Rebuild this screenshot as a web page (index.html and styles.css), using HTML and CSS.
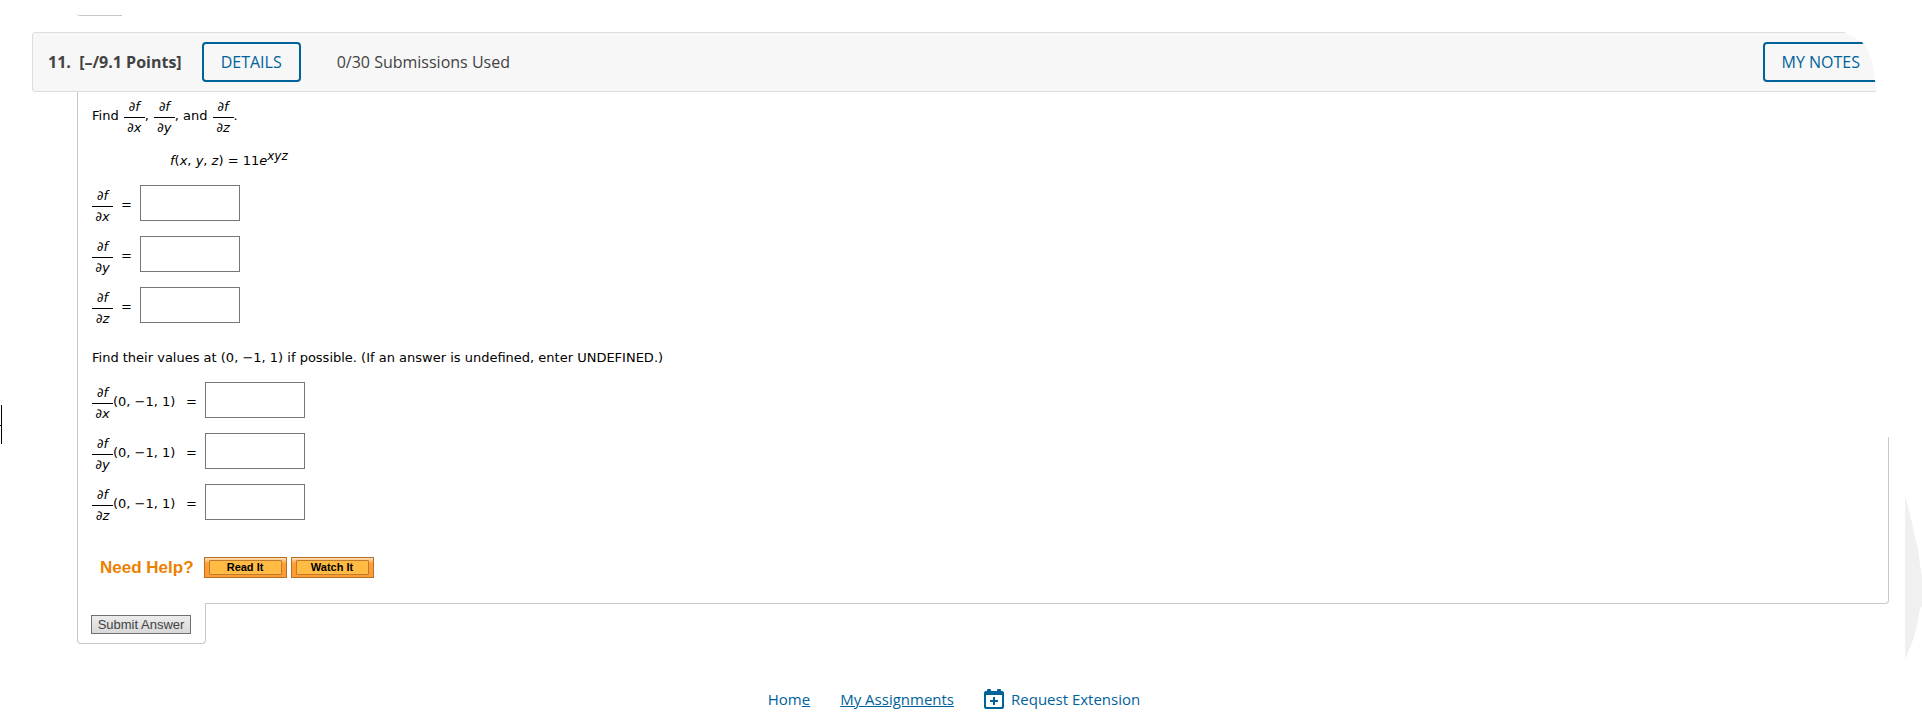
FILE: index.html
```
<!DOCTYPE html>
<html lang="en">
<head>
<meta charset="UTF-8" />
<title>Assignment</title>
<link rel="stylesheet" href="styles.css">
</head>
<body>
  <div class="previous"></div>

  <div class="header">
    <h2>11.&nbsp; [–/9.1 Points]</h2>
    <button type="button" class="outline">DETAILS</button>
    <span class="used">0/30 Submissions Used</span>
    <button type="button" class="outline notes">MY NOTES</button>
  </div>

  <form class="question">
    <div class="panel">
      <div class="row find">
        <span class="txt">Find</span>
        <span class="frac"><i>∂f</i><i>∂x</i></span><span class="txt comma">,</span>
        <span class="frac"><i>∂f</i><i>∂y</i></span><span class="txt comma">, and</span>
        <span class="frac"><i>∂f</i><i>∂z</i></span><span class="txt">.</span>
      </div>

      <p class="function"><i>f</i>(<i>x</i>, <i>y</i>, <i>z</i>) = 11<i>e</i><sup><i>xyz</i></sup></p>

      <div class="row">
        <label class="frac" for="fx"><i>∂f</i><i>∂x</i></label>
        <span class="txt equals">=</span>
        <input type="text" id="fx">
      </div>
      <div class="row">
        <label class="frac" for="fy"><i>∂f</i><i>∂y</i></label>
        <span class="txt equals">=</span>
        <input type="text" id="fy">
      </div>
      <div class="row">
        <label class="frac" for="fz"><i>∂f</i><i>∂z</i></label>
        <span class="txt equals">=</span>
        <input type="text" id="fz">
      </div>

      <p class="values">Find their values at (0, −1, 1) if possible. (If an answer is undefined, enter UNDEFINED.)</p>

      <div class="row">
        <label class="frac" for="vx"><i>∂f</i><i>∂x</i></label>
        <span class="txt point">(0, −1, 1)</span>
        <span class="txt equals">=</span>
        <input type="text" id="vx">
      </div>
      <div class="row">
        <label class="frac" for="vy"><i>∂f</i><i>∂y</i></label>
        <span class="txt point">(0, −1, 1)</span>
        <span class="txt equals">=</span>
        <input type="text" id="vy">
      </div>
      <div class="row">
        <label class="frac" for="vz"><i>∂f</i><i>∂z</i></label>
        <span class="txt point">(0, −1, 1)</span>
        <span class="txt equals">=</span>
        <input type="text" id="vz">
      </div>

      <div class="help">
        <span class="need">Need Help?</span>
        <button type="button" class="helpbtn"><span>Read It</span></button>
        <button type="button" class="helpbtn"><span>Watch It</span></button>
      </div>
    </div>

    <div class="bottom">
      <div class="tab"><button type="button" class="submit">Submit Answer</button></div>
      <div class="rule"></div>
    </div>
  </form>

  <div class="footer">
    <a href="#" class="home">Hom<u>e</u></a>
    <a href="#" class="assignments">My Assignments</a>
    <a href="#" class="extension">
      <svg width="20" height="20" viewBox="0 0 20 20" aria-hidden="true">
        <path fill="#00629b" fill-rule="evenodd" d="M4 0h2q1 0 1 1v1h6V1q0-1 1-1h2q1 0 1 1v1h1q2 0 2 2v14q0 2-2 2H2q-2 0-2-2V4q0-2 2-2h1V1q0-1 1-1zM2 6v11q0 1 1 1h14q1 0 1-1V6z"/>
        <path stroke="#00629b" stroke-width="2" d="M10 8v8M6 12h8"/>
      </svg>
      Request Extension
    </a>
  </div>

  <!-- leftovers at the window edges -->
  <svg class="cursor" width="2" height="39" viewBox="0 0 2 39" aria-hidden="true"><path fill="#000" d="M1 0h1v39H1V21H0v-1h1z"/></svg>
  <svg class="arc" width="17" height="164" viewBox="0 0 17 164" aria-hidden="true"><path fill="#f0f0f0" d="M0 0L3 10L7 27L10 42L13 52L15 69L17 80V110L15 113L12 130L8 144L4 154L0 164z"/></svg>
</body>
</html>
```
FILE: styles.css
```
body{
  margin: 0;
  background-color: white;
  color: black;
  font-family: "DejaVu Sans", sans-serif;
  font-size: 13px;
  line-height: 16px;
}

p, h2{
  margin: 0;
}

/* bottom edge of the question above */
.previous{
  box-sizing: border-box;
  width: 45px;
  height: 16px;
  margin: 0 0 16px 77px;
  border-bottom: 1px solid #c8c8c8;
  border-bottom-left-radius: 3px;
}

.header{
  display: flex;
  align-items: center;
  box-sizing: border-box;
  margin: 0 33px 0 32px;
  padding: 9px 9px 9px 15px;
  border: 1px solid #dcdcdc;
  border-radius: 3px;
  background-color: #f7f7f7;
  color: #424242;
  font-family: "Open Sans", sans-serif;
  font-size: 16px;
  clip-path: polygon(0 0, calc(100% - 45px) 0, calc(100% - 27px) 10px, calc(100% - 21px) 18px, calc(100% - 17px) 30px, calc(100% - 14px) 48px, calc(100% - 13px) 100%, 0 100%);
}

.header h2{
  font-size: 16px;
  font-weight: bold;
}

.outline{
  height: 40px;
  margin-left: 20px;
  padding: 0 17px;
  border: 2px solid #00629b;
  border-radius: 4px;
  background-color: #f7f7f7;
  color: #00629b;
  font-family: "Open Sans", sans-serif;
  font-size: 16px;
  font-weight: 500;
}

.used{
  margin-left: 36px;
}

.notes{
  margin-left: auto;
}

.question{
  position: relative;
  margin: 0 33px 0 77px;
}

/* the right border shows only on the lower part */
.question:after{
  content: "";
  position: absolute;
  right: 0;
  bottom: 40px;
  width: 4px;
  height: 30%;
  border-right: 1px solid #c8c8c8;
  border-bottom: 1px solid #c8c8c8;
  border-bottom-right-radius: 4px;
}

.panel{
  padding: 4px 14px 25px;
  border-left: 1px solid #c8c8c8;
}

.row{
  display: flex;
  align-items: flex-start;
  margin-bottom: 11px;
}

.frac{
  display: flex;
  flex-direction: column;
  min-width: 21px;
  margin-top: 3px;
  text-align: center;
}

.frac i{
  padding-bottom: 2px;
}

.frac i + i{
  padding: 2px 0 0;
  border-top: 1px solid black;
}

.txt{
  margin-top: 12px;
}

.find .txt:first-child{
  margin-right: 5px;
}

.comma{
  margin-right: 5px;
}

.point{
  min-width: 65px;
}

.equals{
  margin-left: 8px;
  margin-right: 8px;
}

.row input{
  box-sizing: border-box;
  width: 100px;
  height: 36px;
  padding: 2px 6px;
  border: 1px solid #767676;
  background-color: white;
  font-size: 13px;
}

.function{
  margin: 17px 0 16px 78px;
}

.function sup{
  font-size: 12px;
  line-height: 0;
}

.values{
  margin: 23px 0 16px;
}

.help{
  display: flex;
  align-items: center;
  gap: 4px;
  margin: 33px 0 0 8px;
}

.need{
  margin-right: 6px;
  color: #ec8000;
  font-family: "Liberation Sans", sans-serif;
  font-size: 17px;
  font-weight: bold;
}

.helpbtn{
  width: 83px;
  height: 21px;
  padding: 2px 4px;
  border: 1px solid #b5702a;
  background: linear-gradient(#fde0b8, #ff9c33 30%, #ff9c33);
  color: black;
  font-family: "Liberation Sans", sans-serif;
  font-size: 11px;
  font-weight: bold;
}

.helpbtn span{
  display: block;
  border: 1px solid #c07a2c;
  border-radius: 1px;
  background-color: #ffbb44;
  line-height: 13px;
}

.bottom{
  display: flex;
}

.tab{
  box-sizing: border-box;
  width: 129px;
  height: 41px;
  padding: 12px 13px 0;
  border: 1px solid #c8c8c8;
  border-top: 0;
  border-radius: 0 0 4px 4px;
}

.rule{
  flex: 1;
  margin-right: 4px;
  border-top: 1px solid #c8c8c8;
}

.submit{
  width: 100px;
  height: 19px;
  padding: 0;
  border: 1px solid #707070;
  background: linear-gradient(#ececec, #d8d8d8);
  color: #424242;
  font-family: "Liberation Sans", sans-serif;
  font-size: 13px;
}

.footer{
  display: flex;
  justify-content: center;
  align-items: center;
  gap: 30px;
  margin: 45px 14px 0 0;
  font-family: "Open Sans", sans-serif;
  font-size: 15px;
}

.footer a{
  color: #00629b;
  text-decoration: none;
}

.footer .assignments{
  text-decoration: underline;
}

.extension{
  display: flex;
  align-items: center;
  gap: 7px;
}

.cursor{
  position: absolute;
  left: 0;
  top: 405px;
}

.arc{
  position: absolute;
  right: 0;
  top: 496px;
}
```
